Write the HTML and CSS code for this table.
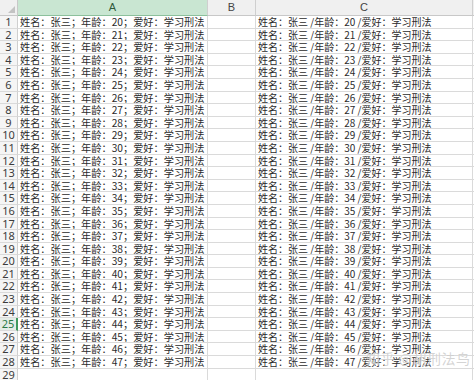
FILE: index.html
```html
<!DOCTYPE html>
<html lang="zh-CN">
<head>
<meta charset="utf-8">
<link rel="stylesheet" href="styles.css">
</head>
<body>
<div class="sheet">
  <div class="corner"><span class="tri"></span></div>
  <div class="ch sel">A</div>
  <div class="ch">B</div>
  <div class="ch">C</div>
  <div class="ch"></div>

  <div class="rh">1</div><div class="c a">姓名：张三；年龄：20；爱好：学习刑法</div><div class="c"></div><div class="c">姓名：张三 /年龄：20 /爱好：学习刑法</div><div class="c"></div>
  <div class="rh">2</div><div class="c a">姓名：张三；年龄：21；爱好：学习刑法</div><div class="c"></div><div class="c">姓名：张三 /年龄：21 /爱好：学习刑法</div><div class="c"></div>
  <div class="rh">3</div><div class="c a">姓名：张三；年龄：22；爱好：学习刑法</div><div class="c"></div><div class="c">姓名：张三 /年龄：22 /爱好：学习刑法</div><div class="c"></div>
  <div class="rh">4</div><div class="c a">姓名：张三；年龄：23；爱好：学习刑法</div><div class="c"></div><div class="c">姓名：张三 /年龄：23 /爱好：学习刑法</div><div class="c"></div>
  <div class="rh">5</div><div class="c a">姓名：张三；年龄：24；爱好：学习刑法</div><div class="c"></div><div class="c">姓名：张三 /年龄：24 /爱好：学习刑法</div><div class="c"></div>
  <div class="rh">6</div><div class="c a">姓名：张三；年龄：25；爱好：学习刑法</div><div class="c"></div><div class="c">姓名：张三 /年龄：25 /爱好：学习刑法</div><div class="c"></div>
  <div class="rh">7</div><div class="c a">姓名：张三；年龄：26；爱好：学习刑法</div><div class="c"></div><div class="c">姓名：张三 /年龄：26 /爱好：学习刑法</div><div class="c"></div>
  <div class="rh">8</div><div class="c a">姓名：张三；年龄：27；爱好：学习刑法</div><div class="c"></div><div class="c">姓名：张三 /年龄：27 /爱好：学习刑法</div><div class="c"></div>
  <div class="rh">9</div><div class="c a">姓名：张三；年龄：28；爱好：学习刑法</div><div class="c"></div><div class="c">姓名：张三 /年龄：28 /爱好：学习刑法</div><div class="c"></div>
  <div class="rh">10</div><div class="c a">姓名：张三；年龄：29；爱好：学习刑法</div><div class="c"></div><div class="c">姓名：张三 /年龄：29 /爱好：学习刑法</div><div class="c"></div>
  <div class="rh">11</div><div class="c a">姓名：张三；年龄：30；爱好：学习刑法</div><div class="c"></div><div class="c">姓名：张三 /年龄：30 /爱好：学习刑法</div><div class="c"></div>
  <div class="rh">12</div><div class="c a">姓名：张三；年龄：31；爱好：学习刑法</div><div class="c"></div><div class="c">姓名：张三 /年龄：31 /爱好：学习刑法</div><div class="c"></div>
  <div class="rh">13</div><div class="c a">姓名：张三；年龄：32；爱好：学习刑法</div><div class="c"></div><div class="c">姓名：张三 /年龄：32 /爱好：学习刑法</div><div class="c"></div>
  <div class="rh">14</div><div class="c a">姓名：张三；年龄：33；爱好：学习刑法</div><div class="c"></div><div class="c">姓名：张三 /年龄：33 /爱好：学习刑法</div><div class="c"></div>
  <div class="rh">15</div><div class="c a">姓名：张三；年龄：34；爱好：学习刑法</div><div class="c"></div><div class="c">姓名：张三 /年龄：34 /爱好：学习刑法</div><div class="c"></div>
  <div class="rh">16</div><div class="c a">姓名：张三；年龄：35；爱好：学习刑法</div><div class="c"></div><div class="c">姓名：张三 /年龄：35 /爱好：学习刑法</div><div class="c"></div>
  <div class="rh">17</div><div class="c a">姓名：张三；年龄：36；爱好：学习刑法</div><div class="c"></div><div class="c">姓名：张三 /年龄：36 /爱好：学习刑法</div><div class="c"></div>
  <div class="rh">18</div><div class="c a">姓名：张三；年龄：37；爱好：学习刑法</div><div class="c"></div><div class="c">姓名：张三 /年龄：37 /爱好：学习刑法</div><div class="c"></div>
  <div class="rh">19</div><div class="c a">姓名：张三；年龄：38；爱好：学习刑法</div><div class="c"></div><div class="c">姓名：张三 /年龄：38 /爱好：学习刑法</div><div class="c"></div>
  <div class="rh">20</div><div class="c a">姓名：张三；年龄：39；爱好：学习刑法</div><div class="c"></div><div class="c">姓名：张三 /年龄：39 /爱好：学习刑法</div><div class="c"></div>
  <div class="rh">21</div><div class="c a">姓名：张三；年龄：40；爱好：学习刑法</div><div class="c"></div><div class="c">姓名：张三 /年龄：40 /爱好：学习刑法</div><div class="c"></div>
  <div class="rh">22</div><div class="c a">姓名：张三；年龄：41；爱好：学习刑法</div><div class="c"></div><div class="c">姓名：张三 /年龄：41 /爱好：学习刑法</div><div class="c"></div>
  <div class="rh">23</div><div class="c a">姓名：张三；年龄：42；爱好：学习刑法</div><div class="c"></div><div class="c">姓名：张三 /年龄：42 /爱好：学习刑法</div><div class="c"></div>
  <div class="rh">24</div><div class="c a">姓名：张三；年龄：43；爱好：学习刑法</div><div class="c"></div><div class="c">姓名：张三 /年龄：43 /爱好：学习刑法</div><div class="c"></div>
  <div class="rh act">25</div><div class="c a">姓名：张三；年龄：44；爱好：学习刑法</div><div class="c"></div><div class="c">姓名：张三 /年龄：44 /爱好：学习刑法</div><div class="c"></div>
  <div class="rh">26</div><div class="c a">姓名：张三；年龄：45；爱好：学习刑法</div><div class="c"></div><div class="c">姓名：张三 /年龄：45 /爱好：学习刑法</div><div class="c"></div>
  <div class="rh">27</div><div class="c a">姓名：张三；年龄：46；爱好：学习刑法</div><div class="c"></div><div class="c">姓名：张三 /年龄：46 /爱好：学习刑法</div><div class="c"></div>
  <div class="rh">28</div><div class="c a">姓名：张三；年龄：47；爱好：学习刑法</div><div class="c"></div><div class="c">姓名：张三 /年龄：47 /爱好：学习刑法</div><div class="c"></div>
  <div class="rh">29</div><div class="c"></div><div class="c"></div><div class="c"></div><div class="c"></div>
</div>
<div class="watermark">知乎 @胡刑法鸟</div>
</body>
</html>
```
FILE: styles.css
```css
html, body {
  margin: 0;
  padding: 0;
  background: #ffffff;
  overflow: hidden;
  width: 474px;
  height: 380px;
}
body {
  position: relative;
  font-family: "Noto Sans CJK SC", "Noto Sans", sans-serif;
}
.sheet {
  display: grid;
  grid-template-columns: 18px 190px 48px 217px 1fr;
  grid-template-rows: 16px;
  grid-auto-rows: 12.6px;
  width: 474px;
}
.sheet > div {
  box-sizing: border-box;
  border-right: 1px solid #dadada;
  border-bottom: 1px solid #dadada;
  overflow: hidden;
  white-space: nowrap;
}
.corner {
  position: relative;
  background: #f0f0f0;
  border-bottom-color: #c8c8c8 !important;
  border-right-color: #c8c8c8 !important;
}
.tri {
  position: absolute;
  right: 2px;
  bottom: 2px;
  width: 0;
  height: 0;
  border-left: 7px solid transparent;
  border-bottom: 7px solid #c3c3c3;
}
.ch {
  background: #f0f0f0;
  color: #444444;
  font-family: "Liberation Sans", "Noto Sans", sans-serif;
  font-size: 11px;
  line-height: 15px;
  text-align: center;
  border-bottom-color: #c8c8c8 !important;
  border-right-color: #cfcfcf !important;
}
.ch.sel {
  background: #c9e6d2;
  color: #2f5a3c;
  border-bottom: 1px solid #8cc09c !important;
}
.rh {
  background: #f5f5f5;
  color: #3c3c3c;
  font-family: "Noto Sans", sans-serif;
  font-size: 11px;
  line-height: 11.6px;
  text-align: center;
  border-right-color: #cfcfcf !important;
}
.rh.act {
  background: #e4ece6;
  color: #2a7a48;
  border-right: 2px solid #3f9a5f !important;
}
.c {
  color: #2b2b2b;
  font-size: 10px;
  line-height: 11.6px;
  padding-left: 2px;
}
.c.a {
  font-size: 10.2px;
}
.watermark {
  position: absolute;
  left: 366px;
  top: 350px;
  font-size: 14px;
  line-height: 16px;
  color: rgba(170, 170, 170, 0.5);
  text-shadow: 0 0 1px rgba(255, 255, 255, 0.9);
  letter-spacing: 0.5px;
  font-family: "Noto Sans CJK SC", sans-serif;
}
```
